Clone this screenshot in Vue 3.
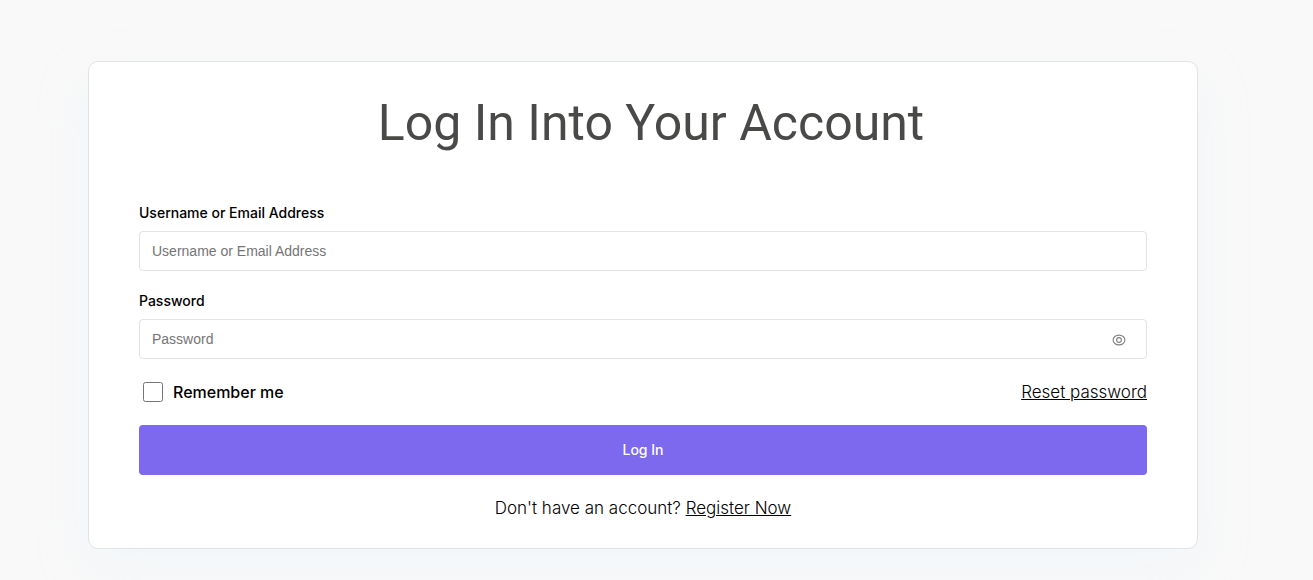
<script setup>
import { ref } from 'vue';

const username = ref('')
const password = ref('')
const remember = ref(false)
const isShowPassword = ref(false)

function togglePassword(){
    isShowPassword.value = !isShowPassword.value
}
</script>

<template>
    <main class="login-page">
        <form class="login-card" @submit.prevent>
            <h1 class="login-title">Log In Into Your Account</h1>
            <div class="form-field">
                <label class="field-label" for="username">Username or Email Address</label>
                <input class="field-input" id="username" type="text" v-model="username" placeholder="Username or Email Address">
            </div>
            <div class="form-field">
                <label class="field-label" for="password">Password</label>
                <div class="password-box">
                    <input class="field-input" id="password" :type="isShowPassword ? 'text' : 'password'" v-model="password" placeholder="Password">
                    <button class="eye-btn" type="button" aria-label="Show password" @click="togglePassword">
                        <svg width="14" height="12" viewBox="0 0 14 12" fill="none" stroke="currentColor" stroke-width="1.1">
                            <ellipse cx="7" cy="6" rx="5.9" ry="4.9" />
                            <circle cx="7" cy="6" r="2.4" />
                        </svg>
                    </button>
                </div>
            </div>
            <div class="options-row">
                <div class="remember">
                    <input class="remember-check" id="remember" type="checkbox" v-model="remember">
                    <label class="remember-label" for="remember">Remember me</label>
                </div>
                <a class="link" href="#">Reset password</a>
            </div>
            <button class="login-btn" type="submit">Log In</button>
            <p class="register">Don't have an account? <a class="link" href="#">Register Now</a></p>
        </form>
    </main>
</template>

<style>
body {
    margin: 0;
    background-color: #f9f9f9;
}
</style>

<style scoped>
.login-page{
    box-sizing: border-box;
    min-height: 100vh;
    padding: 61px 115px 31px 88px;
    overflow: hidden;
    font-family: Inter, "Liberation Sans", sans-serif;
    font-size: 17px;
    font-weight: 300;
    line-height: 24px;
    color: #000;
}
.login-card{
    padding: 31px 50px 28px;
    border: 1px solid #e3e3e3;
    border-radius: 10px;
    background-color: white;
    box-shadow: 0 20px 50px rgba(225, 238, 250, 0.25);
}
.login-title{
    margin: 0 0 50px;
    padding-left: 16px;
    font-family: Roboto, sans-serif;
    font-size: 50px;
    font-weight: 400;
    line-height: 60px;
    text-align: center;
    color: #494947;
}
.form-field{
    margin-bottom: 20px;
}
.field-label{
    display: block;
    margin-bottom: 8px;
    font-size: 14px;
    font-weight: 500;
    line-height: 20px;
}
.field-input{
    display: block;
    box-sizing: border-box;
    width: 100%;
    height: 40px;
    padding: 0 12px;
    border: 1px solid #e3e3e3;
    border-radius: 4px;
    background-color: white;
    font-family: "Liberation Sans", Arial, sans-serif;
    font-size: 14px;
    color: #000;
}
.field-input::placeholder{
    color: #757575;
}
.password-box{
    position: relative;
}
.password-box .field-input{
    padding-right: 48px;
}
.eye-btn{
    position: absolute;
    top: 0;
    right: 12px;
    display: flex;
    align-items: center;
    justify-content: center;
    width: 32px;
    height: 42px;
    padding: 0;
    border: none;
    background: none;
    color: #808080;
    cursor: pointer;
}
.options-row{
    display: flex;
    align-items: center;
    justify-content: space-between;
    height: 26px;
    margin-bottom: 20px;
}
.remember{
    display: flex;
    align-items: center;
}
.remember-check{
    width: 20px;
    height: 20px;
    margin: 0 10px 0 4px;
}
.remember-label{
    font-size: 16px;
    font-weight: 500;
}
.link{
    color: inherit;
    text-decoration: underline;
}
.login-btn{
    width: 100%;
    height: 50px;
    padding: 0 0 2px;
    border: none;
    border-radius: 4px;
    background-color: #7d69ee;
    font-family: inherit;
    font-size: 14px;
    font-weight: 500;
    color: white;
    cursor: pointer;
}
.register{
    margin: 21px 0 0;
    text-align: center;
}
</style>
